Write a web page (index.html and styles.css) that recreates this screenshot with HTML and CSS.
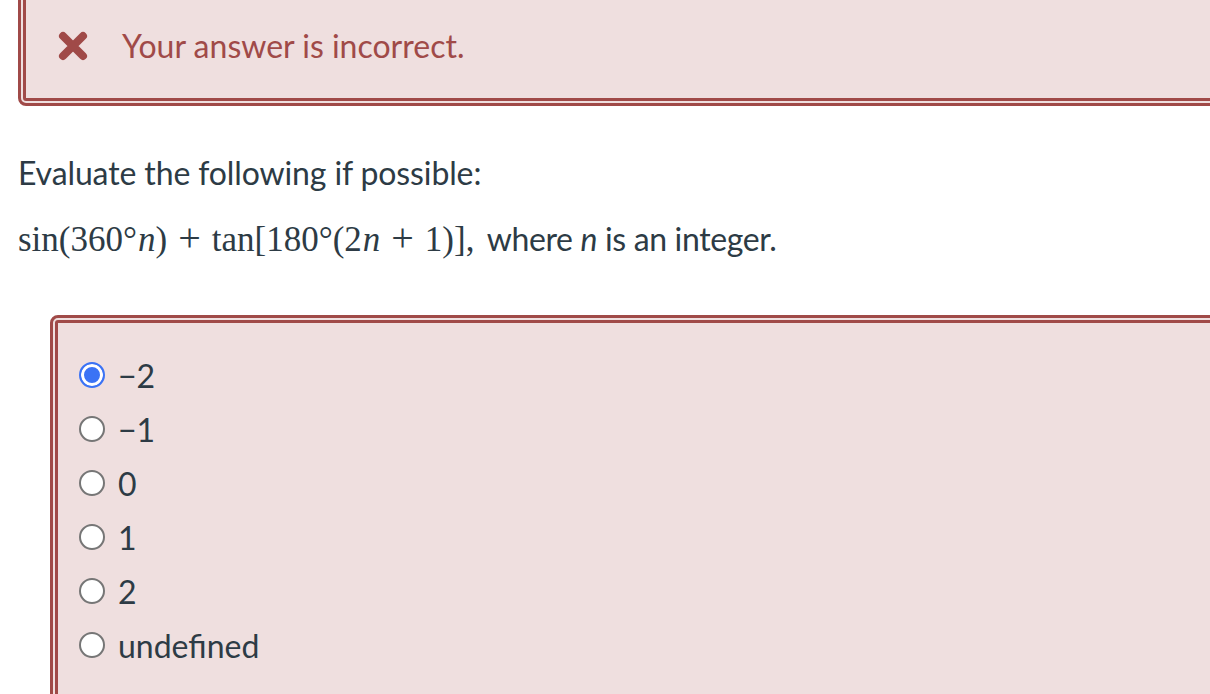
FILE: index.html
```html
<!DOCTYPE html>
<html>
<head>
<meta charset="utf-8">
<link rel="stylesheet" href="styles.css">
</head>
<body>
<div class="banner">
  <svg class="x-icon" viewBox="0 0 30 30" width="30" height="30"><path d="M5 5 L25 25 M25 5 L5 25" stroke="#a04a48" stroke-width="8" stroke-linecap="round"/></svg>
  <span class="banner-text">Your answer is incorrect.</span>
</div>
<div class="question">
  <p class="q-line q1">Evaluate the following if possible:</p>
  <p class="q-line q2"><span class="math">sin(360°<i>n</i>)<span class="op">+</span>tan[180°(2<i>n</i><span class="op">+</span>1)],</span> <span class="tail">where <i>n</i> is an integer.</span></p>
</div>
<div class="options">
  <label class="opt"><span class="radio checked"></span><span class="lbl">−2</span></label>
  <label class="opt"><span class="radio"></span><span class="lbl">−1</span></label>
  <label class="opt"><span class="radio"></span><span class="lbl">0</span></label>
  <label class="opt"><span class="radio"></span><span class="lbl">1</span></label>
  <label class="opt"><span class="radio"></span><span class="lbl">2</span></label>
  <label class="opt"><span class="radio"></span><span class="lbl">undefined</span></label>
</div>
</body>
</html>
```
FILE: styles.css
```css
html, body { margin: 0; padding: 0; background: #fff; overflow: hidden; }
body { font-family: Lato, "Open Sans", sans-serif; color: #2d3b45; width: 1210px; height: 694px; }
.banner {
  margin: -10px -30px 0 18px;
  border: 8px double #a04a48;
  border-radius: 0 0 0 8px;
  background: #efdfdf;
  height: 100px;
  box-sizing: content-box;
  display: flex;
  align-items: center;
  padding-left: 32px;
}
.x-icon { width: 30px; height: 30px; margin-top: -4px; flex: none; }
.banner-text { margin-left: 34px; font-size: 32px; color: #a04a48; margin-top: -6px; }
.question { padding-left: 18px; }
.q-line { margin: 0; font-size: 32px; line-height: 40px; }
.q1 { padding-top: 47px; letter-spacing: -0.12px; }
.q2 { padding-top: 25px; }
.tail { letter-spacing: -0.35px; }
.math { font-family: "Liberation Serif", serif; font-size: 35px; line-height: 1; margin-right: 4px; }
.math i { font-style: italic; margin-left: 1px; }
.op { padding: 0 11px; font-size: 40px; line-height: 1; }
.options {
  margin: 56px -30px 0 50px;
  border: 8px double #a04a48;
  border-radius: 8px 0 0 0;
  background: #efdfdf;
  height: 500px;
  padding: 37px 0 0 21px;
  display: flex;
  flex-direction: column;
  gap: 24px;
}
.opt { display: flex; align-items: center; height: 30px; }
.radio {
  width: 26px; height: 26px; box-sizing: border-box;
  border: 2px solid #767676; border-radius: 50%; background: #fff; flex: none;
}
.radio.checked { border: 2px solid #3b73f5; background: #3b73f5; box-shadow: inset 0 0 0 3px #fff; }
.lbl { margin-left: 13px; font-size: 32px; }
```
